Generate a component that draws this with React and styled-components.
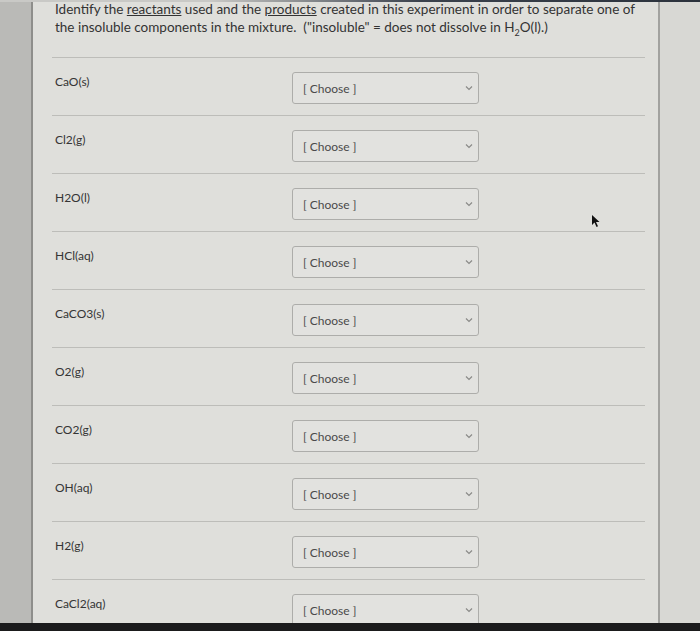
import React from 'react'
import styled, { createGlobalStyle } from 'styled-components'

const GlobalStyle = createGlobalStyle`
    html, body {
        margin: 0;
        padding: 0;
        background: #1c1c1c;
    }
    * {
        box-sizing: border-box;
    }
`

const Screen = styled.div`
    width: 700px;
    height: 631px;
    display: flex;
    flex-direction: column;
    overflow: hidden;
    font-family: Lato, "Open Sans", sans-serif;
    position: relative;
`

const TopEdge = styled.div`
    height: 2px;
    background: linear-gradient(to right, #c9c9c6 0%, #c9c9c6 30%, #3a414c 60%, #2b323c 100%);
`

const Body = styled.div`
    flex: 1;
    display: flex;
    min-height: 0;
`

const LeftGutter = styled.div`
    width: 31px;
    background: #babab7;
`

const Panel = styled.div`
    width: 629px;
    background: #dfdfdb;
    border-left: 2px solid #8e8e8b;
    border-right: 2px solid #a2a29f;
    overflow: hidden;
`

const RightGutter = styled.div`
    flex: 1;
    background: #d8d8d4;
`

const BottomBar = styled.div`
    height: 8px;
    background: #1b1b1c;
`

const Question = styled.div`
    padding: 0 0 0 22px;
    margin-top: -2px;
    font-size: 13.5px;
    line-height: 18px;
    color: #333333;
    white-space: nowrap;
    height: 57px;
`

const Underlined = styled.span`
    text-decoration: underline;
`

const Sub = styled.sub`
    font-size: 9px;
`

const List = styled.div`
    margin-left: 19px;
    width: 593px;
`

const Row = styled.div`
    display: flex;
    align-items: flex-start;
    border-top: 1px solid #bdbdb9;
    padding: 14px 0 11px 3px;
    height: 58px;
`

const Label = styled.div`
    width: 237px;
    font-size: 12px;
    line-height: 16px;
    color: #353535;
    padding-top: 2px;
`

const Select = styled.div`
    width: 187px;
    height: 32px;
    border: 1px solid #adadaa;
    border-radius: 3px;
    background: #e2e2df;
    display: flex;
    align-items: center;
    justify-content: space-between;
    padding: 0 5px 0 10px;
    font-size: 12px;
    color: #4a4a4a;
`

const Cursor = styled.svg`
    position: absolute;
    left: 591px;
    top: 214px;
`

const items = [
    'CaO(s)',
    'Cl2(g)',
    'H2O(l)',
    'HCl(aq)',
    'CaCO3(s)',
    'O2(g)',
    'CO2(g)',
    'OH(aq)',
    'H2(g)',
    'CaCl2(aq)',
]

function Chevron() {
    return (
        <svg width="8" height="6" viewBox="0 0 8 6">
            <path d="M1 1.5 L4 4.5 L7 1.5" fill="none" stroke="#8a8a88" strokeWidth="1.2" />
        </svg>
    )
}

function App() {
    return (
        <Screen>
            <GlobalStyle />
            <TopEdge />
            <Body>
                <LeftGutter />
                <Panel>
                    <Question>
                        Identify the <Underlined>reactants</Underlined> used and the <Underlined>products</Underlined> created in this experiment in order to separate one of
                        <br />
                        the insoluble components in the mixture.&nbsp; ("insoluble" = does not dissolve in H<Sub>2</Sub>O(l).)
                    </Question>
                    <List>
                        {items.map((item) => (
                            <Row key={item}>
                                <Label>{item}</Label>
                                <Select>
                                    <span>[ Choose ]</span>
                                    <Chevron />
                                </Select>
                            </Row>
                        ))}
                    </List>
                </Panel>
                <RightGutter />
            </Body>
            <BottomBar />
            <Cursor width="10" height="14" viewBox="0 0 10 14">
                <path d="M1 1 L1 11 L3.5 8.5 L5.5 13 L7 12.3 L5 8 L8.5 8 Z" fill="#111" />
            </Cursor>
        </Screen>
    )
}

export default App
